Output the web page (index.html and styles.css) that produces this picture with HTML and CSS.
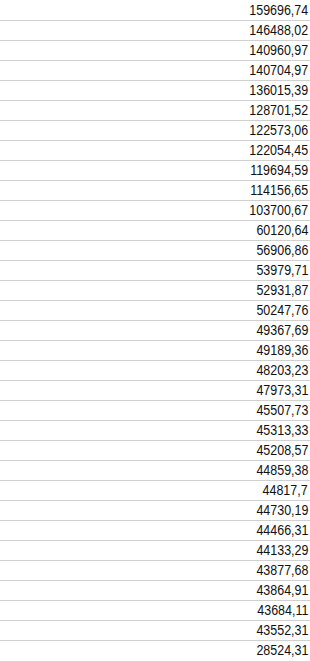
FILE: index.html
```html
<!DOCTYPE html>
<html>
<head>
<meta charset="utf-8">
<link rel="stylesheet" href="styles.css">
</head>
<body>
<div class="sheet">
<div class="row"><span class="val">159696,74</span></div>
<div class="row"><span class="val">146488,02</span></div>
<div class="row"><span class="val">140960,97</span></div>
<div class="row"><span class="val">140704,97</span></div>
<div class="row"><span class="val">136015,39</span></div>
<div class="row"><span class="val">128701,52</span></div>
<div class="row"><span class="val">122573,06</span></div>
<div class="row"><span class="val">122054,45</span></div>
<div class="row"><span class="val">119694,59</span></div>
<div class="row"><span class="val">114156,65</span></div>
<div class="row"><span class="val">103700,67</span></div>
<div class="row"><span class="val">60120,64</span></div>
<div class="row"><span class="val">56906,86</span></div>
<div class="row"><span class="val">53979,71</span></div>
<div class="row"><span class="val">52931,87</span></div>
<div class="row"><span class="val">50247,76</span></div>
<div class="row"><span class="val">49367,69</span></div>
<div class="row"><span class="val">49189,36</span></div>
<div class="row"><span class="val">48203,23</span></div>
<div class="row"><span class="val">47973,31</span></div>
<div class="row"><span class="val">45507,73</span></div>
<div class="row"><span class="val">45313,33</span></div>
<div class="row"><span class="val">45208,57</span></div>
<div class="row"><span class="val">44859,38</span></div>
<div class="row"><span class="val">44817,7</span></div>
<div class="row"><span class="val">44730,19</span></div>
<div class="row"><span class="val">44466,31</span></div>
<div class="row"><span class="val">44133,29</span></div>
<div class="row"><span class="val">43877,68</span></div>
<div class="row"><span class="val">43864,91</span></div>
<div class="row"><span class="val">43684,11</span></div>
<div class="row"><span class="val">43552,31</span></div>
<div class="row"><span class="val">28524,31</span></div>
</div>
</body>
</html>
```

FILE: styles.css
```css
html, body {
  margin: 0;
  padding: 0;
  background: #ffffff;
}
.sheet {
  display: flex;
  flex-direction: column;
  width: 310px;
}
.row {
  box-sizing: border-box;
  height: 20px;
  border-top: 1px solid #d0d0d0;
  padding-right: 2px;
  text-align: right;
  font-family: "Liberation Sans", Arial, sans-serif;
  font-size: 14px;
  line-height: 19px;
  color: #111111;
}
.row:first-child {
  border-top-color: transparent;
}
.val {
  display: inline-block;
  transform: scaleX(0.89);
  transform-origin: right center;
}
```
